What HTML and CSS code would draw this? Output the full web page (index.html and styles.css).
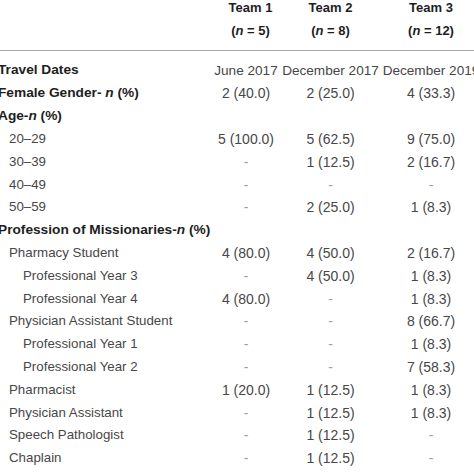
FILE: index.html
```html
<!DOCTYPE html>
<html>
<head>
<meta charset="utf-8">
<link rel="stylesheet" href="styles.css">
</head>
<body>
<table class="tbl">
  <colgroup>
    <col class="c-label"><col class="c-t1"><col class="c-t2"><col class="c-t3">
  </colgroup>
  <thead>
    <tr class="h1"><th></th><th class="t1">Team 1</th><th>Team 2</th><th>Team 3</th></tr>
    <tr class="h2"><th></th><th class="t1">(<i>n</i> = 5)</th><th>(<i>n</i> = 8)</th><th>(<i>n</i> = 12)</th></tr>
  </thead>
  <tbody>
    <tr class="first"><td class="b">Travel Dates</td><td><span class="wide">June 2017</span></td><td><span class="wide">December 2017</span></td><td><span class="wide">December 2019</span></td></tr>
    <tr><td class="b">Female Gender- <i>n</i> (%)</td><td>2 (40.0)</td><td>2 (25.0)</td><td>4 (33.3)</td></tr>
    <tr><td class="b">Age-<i>n</i> (%)</td><td></td><td></td><td></td></tr>
    <tr><td class="l1">20–29</td><td>5 (100.0)</td><td>5 (62.5)</td><td>9 (75.0)</td></tr>
    <tr><td class="l1">30–39</td><td class="d">-</td><td>1 (12.5)</td><td>2 (16.7)</td></tr>
    <tr><td class="l1">40–49</td><td class="d">-</td><td class="d">-</td><td class="d">-</td></tr>
    <tr><td class="l1">50–59</td><td class="d">-</td><td>2 (25.0)</td><td>1 (8.3)</td></tr>
    <tr><td class="b">Profession of Missionaries-<i>n</i> (%)</td><td></td><td></td><td></td></tr>
    <tr><td class="l1">Pharmacy Student</td><td>4 (80.0)</td><td>4 (50.0)</td><td>2 (16.7)</td></tr>
    <tr><td class="l2">Professional Year 3</td><td class="d">-</td><td>4 (50.0)</td><td>1 (8.3)</td></tr>
    <tr><td class="l2">Professional Year 4</td><td>4 (80.0)</td><td class="d">-</td><td>1 (8.3)</td></tr>
    <tr><td class="l1">Physician Assistant Student</td><td class="d">-</td><td class="d">-</td><td>8 (66.7)</td></tr>
    <tr><td class="l2">Professional Year 1</td><td class="d">-</td><td class="d">-</td><td>1 (8.3)</td></tr>
    <tr><td class="l2">Professional Year 2</td><td class="d">-</td><td class="d">-</td><td>7 (58.3)</td></tr>
    <tr><td class="l1">Pharmacist</td><td>1 (20.0)</td><td>1 (12.5)</td><td>1 (8.3)</td></tr>
    <tr><td class="l1">Physician Assistant</td><td class="d">-</td><td>1 (12.5)</td><td>1 (8.3)</td></tr>
    <tr><td class="l1">Speech Pathologist</td><td class="d">-</td><td>1 (12.5)</td><td class="d">-</td></tr>
    <tr><td class="l1">Chaplain</td><td class="d">-</td><td>1 (12.5)</td><td class="d">-</td></tr>
  </tbody>
</table>
</body>
</html>
```
FILE: styles.css
```css
html, body {
  margin: 0;
  padding: 0;
  background: #fff;
  overflow: hidden;
}
body {
  width: 474px;
  height: 474px;
}
.tbl {
  table-layout: fixed;
  border-collapse: collapse;
  width: 491px;
  margin-left: -2px;
  margin-top: -3px;
  font-family: "Liberation Sans", Arial, sans-serif;
  font-size: 14px;
  color: #474747;
}
.c-label { width: 206px; }
.c-t1 { width: 84px; }
.c-t2 { width: 85px; }
.c-t3 { width: 116px; }
.tbl th, .tbl td {
  padding: 0;
  height: 22.8px;
  line-height: 22.8px;
  white-space: nowrap;
  text-align: center;
  overflow: visible;
}
.tbl th {
  font-weight: bold;
  font-size: 13px;
  color: #1e1e1e;
}
.tbl th.t1 {
  padding-left: 9px;
}
.tbl .h2 th {
  border-bottom: 1px solid #a8a8a8;
  padding-bottom: 7px;
}
.tbl tr.first td {
  padding-top: 8px;
}
.wide {
  display: inline-block;
  margin: 0 -30px;
  font-size: 13.6px;
}
.tbl td.b {
  text-align: left;
  font-weight: bold;
  font-size: 13.7px;
  color: #1e1e1e;
}
.tbl td.l1 {
  text-align: left;
  padding-left: 11px;
  font-size: 13.3px;
}
.tbl td.l2 {
  text-align: left;
  padding-left: 25px;
  font-size: 13.3px;
}
.tbl td.d {
  color: #a0a0a0;
}
```
